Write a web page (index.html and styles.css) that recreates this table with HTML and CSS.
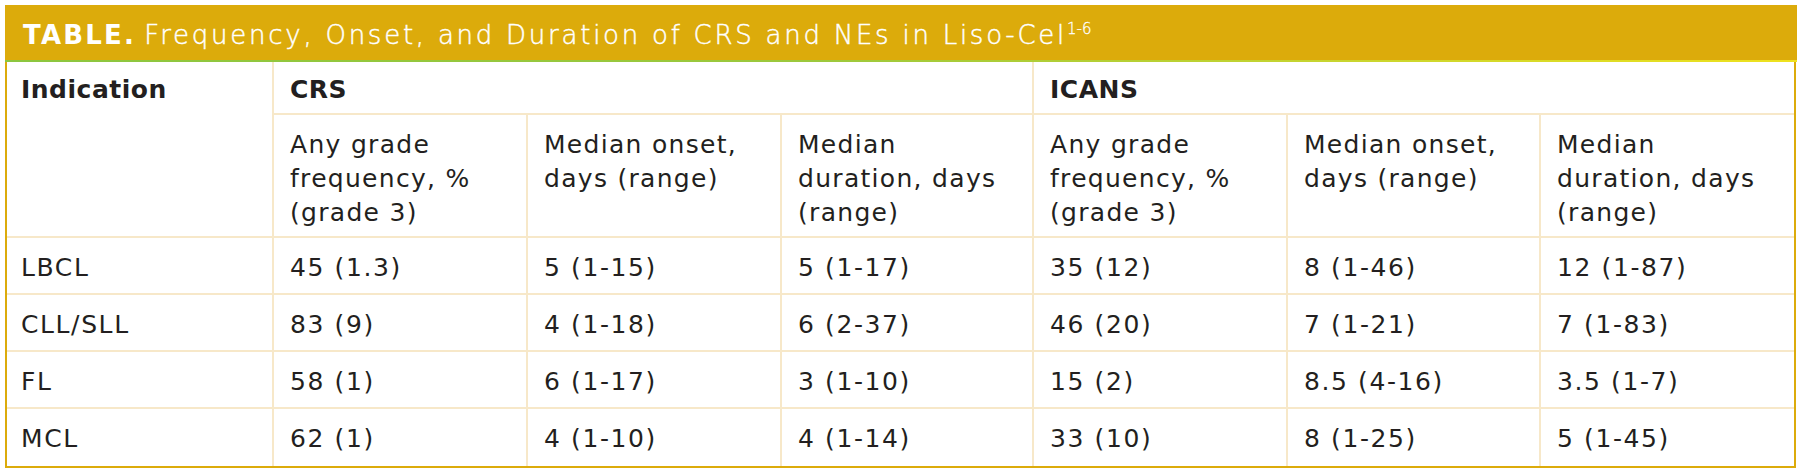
FILE: index.html
```html
<!DOCTYPE html>
<html lang="en">
<head>
<meta charset="utf-8">
<title>Table – Liso-Cel CRS and NEs</title>
<link rel="stylesheet" href="styles.css">
</head>
<body>
<figure class="figure">
  <figcaption class="title-bar"><strong class="title-label">TABLE.</strong> <span class="title-text">Frequency, Onset, and Duration of CRS and NEs in Liso-Cel<sup class="title-sup">1-6</sup></span></figcaption>
  <div class="title-rule"></div>
  <div class="grid">
    <div class="cell head first span-rows">Indication</div>
    <div class="cell head span-cols">CRS</div>
    <div class="cell head span-cols last">ICANS</div>

    <div class="cell sub">Any grade frequency, % (grade 3)</div>
    <div class="cell sub">Median onset, days (range)</div>
    <div class="cell sub">Median duration, days (range)</div>
    <div class="cell sub">Any grade frequency, % (grade 3)</div>
    <div class="cell sub">Median onset, days (range)</div>
    <div class="cell sub last">Median duration, days (range)</div>

    <div class="cell data first">LBCL</div>
    <div class="cell data">45 (1.3)</div>
    <div class="cell data">5 (1-15)</div>
    <div class="cell data">5 (1-17)</div>
    <div class="cell data">35 (12)</div>
    <div class="cell data">8 (1-46)</div>
    <div class="cell data last">12 (1-87)</div>

    <div class="cell data first">CLL/SLL</div>
    <div class="cell data">83 (9)</div>
    <div class="cell data">4 (1-18)</div>
    <div class="cell data">6 (2-37)</div>
    <div class="cell data">46 (20)</div>
    <div class="cell data">7 (1-21)</div>
    <div class="cell data last">7 (1-83)</div>

    <div class="cell data first">FL</div>
    <div class="cell data">58 (1)</div>
    <div class="cell data">6 (1-17)</div>
    <div class="cell data">3 (1-10)</div>
    <div class="cell data">15 (2)</div>
    <div class="cell data">8.5 (4-16)</div>
    <div class="cell data last">3.5 (1-7)</div>

    <div class="cell data first bottom">MCL</div>
    <div class="cell data bottom">62 (1)</div>
    <div class="cell data bottom">4 (1-10)</div>
    <div class="cell data bottom">4 (1-14)</div>
    <div class="cell data bottom">33 (10)</div>
    <div class="cell data bottom">8 (1-25)</div>
    <div class="cell data bottom last">5 (1-45)</div>
  </div>
</figure>
</body>
</html>
```
FILE: styles.css
```css
html, body {
  margin: 0;
  padding: 0;
  background: #ffffff;
}

.figure {
  margin: 5px 0 0 5px;
  width: 1792px;
  font-family: "DejaVu Sans", "Liberation Sans", sans-serif;
  color: #231f20;
}

.title-bar {
  box-sizing: border-box;
  height: 55px;
  padding: 15px 0 0 18px;
  background: #dcab0b;
  color: #ffffff;
  font-size: 26px;
  line-height: 30px;
  white-space: nowrap;
}

.title-label {
  font-weight: 700;
  letter-spacing: 2.2px;
}

.title-text {
  font-weight: 300;
  letter-spacing: 2.75px;
  -webkit-text-stroke: 0.45px #ffffff;
}

.title-sup {
  font-size: 15px;
  letter-spacing: 0;
  vertical-align: 10px;
  line-height: 0;
  -webkit-text-stroke: 0.3px #ffffff;
}

.title-rule {
  height: 2px;
  width: 1792px;
  background: linear-gradient(to right, #8cc63f 0%, #9cc83c 45%, #c9d52f 75%, #efe21e 100%);
}

.grid {
  display: grid;
  width: 1791px;
  box-sizing: border-box;
  grid-template-columns: 267px 254px 254px 252px 254px 253px 253px;
  grid-template-rows: 53px 123px repeat(4, 57px);
  border-left: 2px solid #dcab0b;
  border-right: 2px solid #dcab0b;
  border-bottom: 2px solid #dcab0b;
}

.cell {
  box-sizing: border-box;
  border-right: 2px solid #f7e8c9;
  border-bottom: 2px solid #f7e8c9;
  padding-left: 16px;
  padding-right: 8px;
  font-size: 25px;
  line-height: 34px;
  letter-spacing: 1.3px;
}

.cell.last {
  border-right: none;
}

.cell.bottom {
  border-bottom: none;
}

.cell.first {
  padding-left: 14px;
}

.head {
  padding-top: 11px;
  font-weight: 700;
  letter-spacing: 0.5px;
}

.span-rows {
  grid-row: span 2;
}

.span-cols {
  grid-column: span 3;
}

.sub {
  padding-top: 13px;
}

.data {
  padding-top: 13px;
  letter-spacing: 1.6px;
}
```
